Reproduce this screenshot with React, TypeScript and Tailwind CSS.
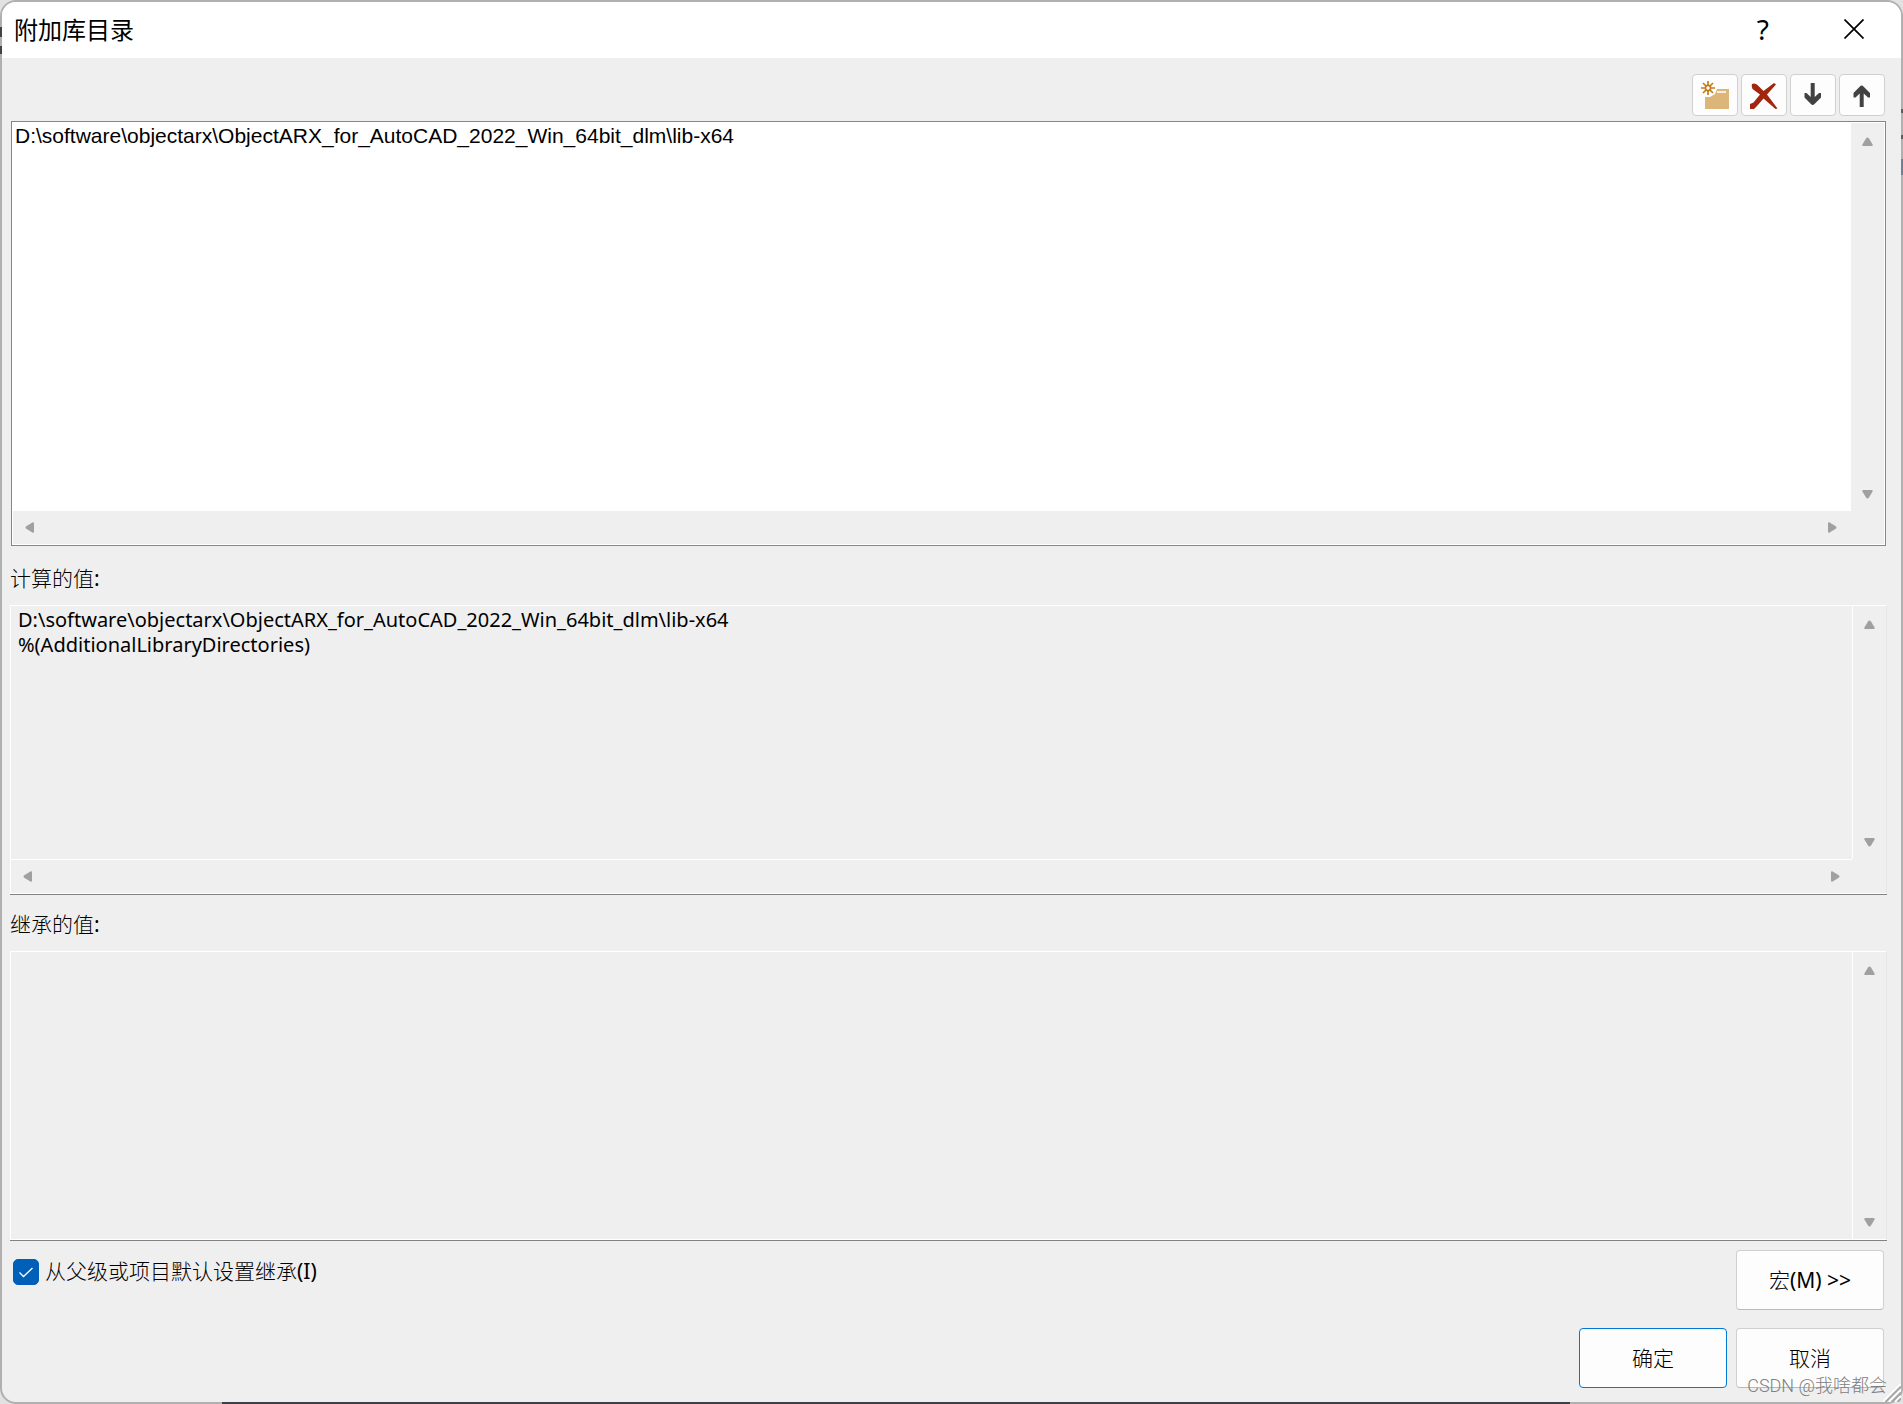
import { useState } from 'react'
import type { ReactNode } from 'react'

const arrowPaths = {
  up: 'M5.5 .5 Q6.3 .5 7 1.6 L10.6 7.4 Q11 9 9.8 9 H1.2 Q0 9 .4 7.4 L4 1.6 Q4.7 .5 5.5 .5Z',
  down: 'M5.5 8.5 Q6.3 8.5 7 7.4 L10.6 1.6 Q11 0 9.8 0 H1.2 Q0 0 .4 1.6 L4 7.4 Q4.7 8.5 5.5 8.5Z',
  left: 'M.5 5.5 Q.5 4.7 1.6 4 L7.4 .4 Q9 0 9 1.2 V9.8 Q9 11 7.4 10.6 L1.6 7 Q.5 6.3 .5 5.5Z',
  right: 'M8.5 5.5 Q8.5 4.7 7.4 4 L1.6 .4 Q0 0 0 1.2 V9.8 Q0 11 1.6 10.6 L7.4 7 Q8.5 6.3 8.5 5.5Z',
}

function ScrollArrow({ dir }: { dir: keyof typeof arrowPaths }) {
  const vertical = dir === 'up' || dir === 'down'
  return (
    <svg width={vertical ? 11 : 9} height={vertical ? 9 : 11} className="shrink-0 fill-[#a0a0a0]">
      <path d={arrowPaths[dir]} />
    </svg>
  )
}

function ToolButton({ label, children }: { label: string; children: ReactNode }) {
  return (
    <button
      type="button"
      aria-label={label}
      className="h-[42px] w-[46px] rounded border border-[#d0d0d0] bg-[#fdfdfd] hover:bg-[#e5f1fb]"
    >
      <svg viewBox="1 1 44 40" width="44" height="40">
        {children}
      </svg>
    </button>
  )
}

function PushButton({ children, primary }: { children: ReactNode; primary?: boolean }) {
  return (
    <button
      type="button"
      className={
        primary
          ? 'h-15 w-37 rounded border border-[#0078d4] bg-[#fdfdfd] pt-0.5 text-[21px] font-light'
          : 'h-15 w-37 rounded border border-[#d0d0d0] border-b-[#bababa] bg-[#fdfdfd] pt-0.5 text-[21px] font-light'
      }
    >
      {children}
    </button>
  )
}

interface ValueBoxProps {
  id: string
  value: string
  horizontal?: boolean
}

function ValueBox({ id, value, horizontal }: ValueBoxProps) {
  return (
    <div className="mr-3.5 ml-2 flex min-h-0 shrink-0 grow-[289] basis-0 flex-col border-b border-[#828282]">
      <div className="flex grow flex-col border border-white border-r-[#e6e6e6]">
        <div className="flex grow">
          <textarea
            id={id}
            readOnly
            wrap="off"
            defaultValue={value}
            className="grow resize-none overflow-hidden px-[7px] pt-px font-['Noto_Sans','Noto_Sans_CJK_SC',sans-serif] text-xl leading-[25px] outline-none"
          />
          <div className="flex w-[34px] flex-col items-center justify-between border-l border-white pt-3.5 pb-3">
            <ScrollArrow dir="up" />
            <ScrollArrow dir="down" />
          </div>
        </div>
        {horizontal && (
          <div className="mr-[34px] flex h-[34px] items-center justify-between border-t border-white px-3">
            <ScrollArrow dir="left" />
            <ScrollArrow dir="right" />
          </div>
        )}
      </div>
    </div>
  )
}

export default function App() {
  const [inherit, setInherit] = useState(true)

  return (
    <div className="relative flex min-h-screen flex-col bg-[#e2e2e2] font-['Noto_Sans','Noto_Sans_CJK_SC',sans-serif] text-black">
      {/* slivers of the window behind the dialog */}
      <div className="absolute top-[27px] left-0 z-10 h-2.5 w-0.5 bg-[#444]" />
      <div className="absolute top-[46px] left-0 z-10 h-2 w-0.5 bg-[#444]" />
      <div className="absolute top-[109px] right-0 z-10 h-1 w-0.5 bg-[#5d5a6b]" />
      <div className="absolute top-[135px] right-0 z-10 h-1 w-0.5 bg-[#5d5a6b]" />
      <div className="absolute top-[159px] right-0 z-10 h-4 w-0.5 bg-[#6f7f95]" />
      <div className="absolute right-[17.5%] bottom-0 left-[222px] z-10 h-0.5 bg-[#3f3f46]" />

      <main className="flex grow flex-col overflow-hidden rounded-2xl border-2 border-[#b0b0b0] bg-[#efefef]">
        <header className="flex h-14 shrink-0 items-center justify-between bg-white pr-[33px] pb-0.5 pl-3">
          <h1 className="font-['Noto_Sans_CJK_SC',sans-serif] text-2xl">附加库目录</h1>
          <div className="flex items-center gap-[71px]">
            <button type="button" aria-label="帮助" className="text-[28px] leading-8">
              ?
            </button>
            <button type="button" aria-label="关闭" className="p-1">
              <svg width="20" height="20" viewBox="0 0 20 20" className="stroke-black" strokeWidth="1.7">
                <path d="M.5 .5 L19.5 19.5 M19.5 .5 L.5 19.5" />
              </svg>
            </button>
          </div>
        </header>

        <div className="mr-4 mb-[5px] flex shrink-0 justify-end gap-[3px] pt-4">
          <ToolButton label="新行">
            <path d="M13 23 H18 L23 20 L25 15 H37 V35 H13Z" fill="#dcb679" />
            <path d="M25 18 H34" stroke="#fff" strokeWidth="1.6" />
            <circle cx="16" cy="14" r="8" fill="#fdfdfd" />
            <g stroke="#c27d1a" strokeWidth="1.7" fill="none">
              <circle cx="16" cy="14" r="2.6" />
              <path d="M16 7 V11 M16 17 V21 M9 14 H13 M19 14 H23 M11 9 L14 12 M18 16 L21 19 M21 9 L18 12 M14 16 L11 19" />
            </g>
          </ToolButton>
          <ToolButton label="删除">
            <path
              d="M11 10 Q14 8.500 16.500 11 L22.500 17 L33 9 L35 10.500 L26 20.500 L36.500 34.500 L34.500 35 L22.500 24.500 L16 32 L13 35 H9 V30 L12.500 28.500 L19 20.500 L11.500 15 Q10 12 11 10Z"
              fill="#a1260d"
            />
          </ToolButton>
          <ToolButton label="下移">
            <path
              d="M20.700 9 H24.700 V23 L29 19 H31 V23.500 L24.500 30 Q22.700 32 20.900 30 L14.500 23.500 V19 H16.500 L20.700 23Z"
              fill="#424242"
            />
          </ToolButton>
          <ToolButton label="上移">
            <path
              d="M20.700 33 H24.700 V19.500 L29 23.500 H31 V19 L24.500 12.500 Q22.700 10.500 20.900 12.500 L14.500 19 V23.500 H16.500 L20.700 19.500Z"
              fill="#424242"
            />
          </ToolButton>
        </div>

        <div className="mr-[15px] ml-[9px] flex min-h-0 shrink-0 grow-[421] basis-0 flex-col border border-[#828790] bg-white p-px">
          <div className="flex grow">
            <textarea
              aria-label="附加库目录"
              wrap="off"
              spellCheck={false}
              defaultValue={'D:\\software\\objectarx\\ObjectARX_for_AutoCAD_2022_Win_64bit_dlm\\lib-x64'}
              className="grow resize-none overflow-hidden px-0.5 pt-px font-['Liberation_Sans',sans-serif] text-[21px] leading-6 outline-none"
            />
            <div className="flex w-[33px] flex-col items-center justify-between bg-[#efefef] pt-3.5 pb-3">
              <ScrollArrow dir="up" />
              <ScrollArrow dir="down" />
            </div>
          </div>
          <div className="flex h-[33px] items-center justify-between bg-[#efefef] pr-[47px] pl-3">
            <ScrollArrow dir="left" />
            <ScrollArrow dir="right" />
          </div>
        </div>

        <label htmlFor="evaluated" className="flex h-[59px] shrink-0 items-center pt-1.5 pl-2 text-[21px] font-light">
          计算的值<span className="font-normal">:</span>
        </label>
        <ValueBox
          id="evaluated"
          value={'D:\\software\\objectarx\\ObjectARX_for_AutoCAD_2022_Win_64bit_dlm\\lib-x64\n%(AdditionalLibraryDirectories)'}
          horizontal
        />

        <label htmlFor="inherited" className="flex h-14 shrink-0 items-center pt-1 pl-2 text-[21px] font-light">
          继承的值<span className="font-normal">:</span>
        </label>
        <ValueBox id="inherited" value="" />

        <footer className="flex shrink-0 items-start justify-between pt-[9px] pr-[17px] pb-3.5 pl-[11px]">
          <label className="flex h-11 items-center gap-1.5 text-[21px] font-light">
            <span className="relative flex">
              <input
                type="checkbox"
                checked={inherit}
                onChange={(e) => setInherit(e.target.checked)}
                className="size-[26px] appearance-none rounded-[5px] border border-[#888] bg-white checked:border-[#005fb8] checked:bg-[#005fb8]"
              />
              {inherit && (
                <svg viewBox="0 0 26 26" className="pointer-events-none absolute inset-0 fill-none stroke-white" strokeWidth="1.3">
                  <path d="M6.500 13.500 L10.500 17.500 L19.500 9" />
                </svg>
              )}
            </span>
            <span>
              从父级或项目默认设置继承<span className="font-normal">(I)</span>
            </span>
          </label>
          <div className="flex flex-col items-end gap-[18px]">
            <PushButton>
              宏<span className="font-normal">(M) &gt;&gt;</span>
            </PushButton>
            <div className="flex gap-[9px]">
              <PushButton primary>确定</PushButton>
              <PushButton>取消</PushButton>
            </div>
          </div>
        </footer>
      </main>

      <svg width="18" height="18" viewBox="0 0 18 18" className="absolute right-0.5 bottom-0.5" strokeWidth="2">
        <path d="M0 18 L18 0 M6 18 L18 6 M12 18 L18 12" stroke="#fff" />
        <path d="M2.500 18 L18 2.500 M8.500 18 L18 8.500 M14.500 18 L18 14.500" stroke="#a6a6a6" />
      </svg>
      <span className="absolute right-4 bottom-1.5 font-['Roboto','Noto_Sans_CJK_SC',sans-serif] text-lg leading-6 font-light text-[#808080]">
        CSDN @我啥都会
      </span>
    </div>
  )
}
